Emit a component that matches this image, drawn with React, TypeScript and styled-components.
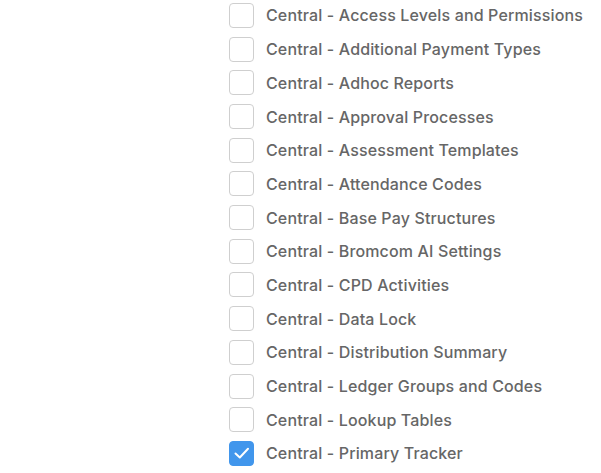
import React from 'react'
import styled, {createGlobalStyle} from "styled-components";

const items = [
    {label: 'Central - Access Levels and Permissions', checked: false},
    {label: 'Central - Additional Payment Types', checked: false},
    {label: 'Central - Adhoc Reports', checked: false},
    {label: 'Central - Approval Processes', checked: false},
    {label: 'Central - Assessment Templates', checked: false},
    {label: 'Central - Attendance Codes', checked: false},
    {label: 'Central - Base Pay Structures', checked: false},
    {label: 'Central - Bromcom AI Settings', checked: false},
    {label: 'Central - CPD Activities', checked: false},
    {label: 'Central - Data Lock', checked: false},
    {label: 'Central - Distribution Summary', checked: false},
    {label: 'Central - Ledger Groups and Codes', checked: false},
    {label: 'Central - Lookup Tables', checked: false},
    {label: 'Central - Primary Tracker', checked: true},
];

const GlobalStyle = createGlobalStyle`
  html, body {
    margin: 0;
    padding: 0;
    background: #ffffff;
    overflow: hidden;
  }
  body {
    font-family: Inter, "Noto Sans", sans-serif;
  }
`

export default function App() {
    return (
        <>
            <GlobalStyle/>
            <List>
                {items.map(item => (
                    <Row key={item.label}>
                        <Box $checked={item.checked}>
                            {item.checked && (
                                <svg width="18" height="18" viewBox="0 0 18 18" fill="none">
                                    <path d="M2.5 9.5 L6.8 13.5 L15 4.8" stroke="#ffffff" strokeWidth="2"
                                          strokeLinecap="round" strokeLinejoin="round"/>
                                </svg>
                            )}
                        </Box>
                        <Label>{item.label}</Label>
                    </Row>
                ))}
            </List>
        </>
    );
}

const List = styled.div`
  display: flex;
  flex-direction: column;
  padding-left: 229px;
  margin-top: -1.4px;
`
const Row = styled.label`
  display: flex;
  align-items: center;
  gap: 12px;
  height: 33.7px;
  cursor: pointer;
`
const Box = styled.span<{ $checked: boolean }>`
  box-sizing: border-box;
  width: 25px;
  height: 25px;
  flex-shrink: 0;
  border-radius: 4px;
  border: 1px solid ${p => p.$checked ? '#4196ec' : '#cfcfcf'};
  background-color: ${p => p.$checked ? '#4196ec' : '#ffffff'};
  display: flex;
  align-items: center;
  justify-content: center;
`
const Label = styled.span`
  font-size: 16px;
  font-weight: 500;
  letter-spacing: 0.14px;
  color: #666666;
  white-space: nowrap;
`
